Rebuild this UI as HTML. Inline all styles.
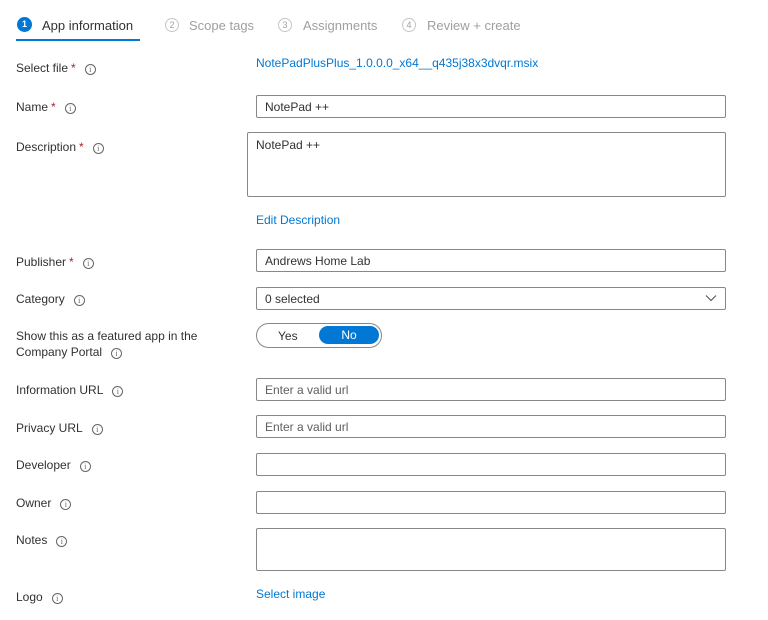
<!DOCTYPE html>
<html><head><meta charset="utf-8"><style>
body{margin:0;width:768px;height:620px;background:#fff;font-family:"Liberation Sans",sans-serif;font-size:12px;color:#323130;position:relative;overflow:hidden}
.a{position:absolute;white-space:nowrap}
.lbl{position:absolute;left:16px;white-space:nowrap;line-height:14px}
.req{color:#a4262c;margin-left:3px}
.i{display:inline-block;width:9px;height:9px;border:1px solid #666;border-radius:50%;font-size:8px;line-height:9px;text-align:center;color:#666;margin-left:9px;vertical-align:0px;font-family:"Liberation Serif",serif}
.box{position:absolute;left:256px;width:468px;height:21px;border:1px solid #8a8886;border-radius:2px;box-sizing:content-box}
.box span{position:absolute;left:8px;top:4px;font-size:12px}
.ph{color:#605e5c}
.link{color:#0078d4}
.step{position:absolute;top:18px;width:12px;height:12px;border:1px solid #c8c6c4;border-radius:50%;font-size:9px;line-height:12px;text-align:center;color:#a19f9d}
.st{position:absolute;top:18px;font-size:13px;color:#a19f9d}
</style></head><body>
<div class="a" style="left:17px;top:17px;width:15px;height:15px;border-radius:50%;background:#0078d4;color:#fff;font-size:9px;line-height:15px;text-align:center;font-weight:bold">1</div>
<div class="st" style="left:42px;color:#323130">App information</div>
<div class="a" style="left:16px;top:39px;width:124px;height:2px;background:#0078d4"></div>
<div class="step" style="left:165px">2</div><div class="st" style="left:189px">Scope tags</div>
<div class="step" style="left:278px">3</div><div class="st" style="left:303px">Assignments</div>
<div class="step" style="left:402px">4</div><div class="st" style="left:427px">Review + create</div>

<div class="lbl" style="top:61px">Select file<span class="req">*</span><span class="i">i</span></div>
<div class="a link" style="left:256px;top:56px">NotePadPlusPlus_1.0.0.0_x64__q435j38x3dvqr.msix</div>

<div class="lbl" style="top:100px">Name<span class="req">*</span><span class="i">i</span></div>
<div class="box" style="top:95px"><span>NotePad ++</span></div>

<div class="lbl" style="top:140px">Description<span class="req">*</span><span class="i">i</span></div>
<div class="box" style="left:247px;width:477px;top:132px;height:63px"><span style="top:5px">NotePad ++</span></div>
<div class="a link" style="left:256px;top:213px">Edit Description</div>

<div class="lbl" style="top:255px">Publisher<span class="req">*</span><span class="i">i</span></div>
<div class="box" style="top:249px"><span>Andrews Home Lab</span></div>

<div class="lbl" style="top:292px">Category<span class="i">i</span></div>
<div class="box" style="top:287px"><span>0 selected</span>
<svg style="position:absolute;right:8px;top:6px" width="12" height="8" viewBox="0 0 12 8"><path d="M1 1.5L6 6.5L11 1.5" fill="none" stroke="#605e5c" stroke-width="1.2"/></svg></div>

<div class="lbl" style="top:329px">Show this as a featured app in the</div>
<div class="lbl" style="top:345px">Company Portal<span class="i">i</span></div>
<div class="a" style="left:256px;top:323px;width:124px;height:23px;border:1px solid #8a8886;border-radius:13px"></div>
<div class="a" style="left:278px;top:329px">Yes</div>
<div class="a" style="left:319px;top:326px;width:60px;height:18px;border-radius:9px;background:#0078d4;color:#fff;text-align:center;line-height:18px">No</div>

<div class="lbl" style="top:383px">Information URL<span class="i">i</span></div>
<div class="box" style="top:378px"><span class="ph">Enter a valid url</span></div>

<div class="lbl" style="top:421px">Privacy URL<span class="i">i</span></div>
<div class="box" style="top:415px"><span class="ph">Enter a valid url</span></div>

<div class="lbl" style="top:458px">Developer<span class="i">i</span></div>
<div class="box" style="top:453px"></div>

<div class="lbl" style="top:496px">Owner<span class="i">i</span></div>
<div class="box" style="top:491px"></div>

<div class="lbl" style="top:533px">Notes<span class="i">i</span></div>
<div class="box" style="top:528px;height:41px"></div>

<div class="lbl" style="top:590px">Logo<span class="i">i</span></div>
<div class="a link" style="left:256px;top:587px">Select image</div>
</body></html>
